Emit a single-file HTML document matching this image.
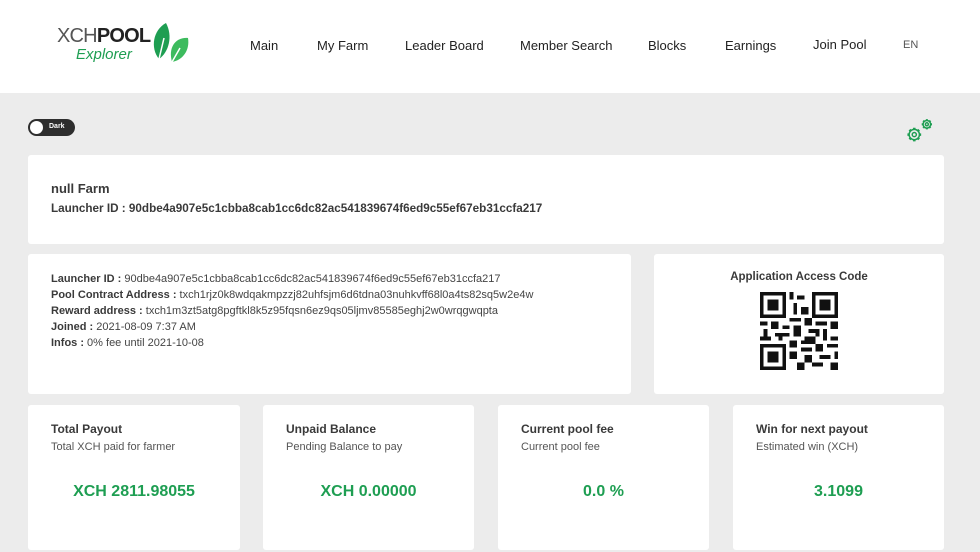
<!DOCTYPE html>
<html><head><meta charset="utf-8"><style>
*{margin:0;padding:0;box-sizing:border-box}
body{width:980px;height:552px;overflow:hidden;background:#ececec;font-family:"Liberation Sans",Arial,sans-serif;color:#333;position:relative}
.hdr{position:absolute;left:0;top:0;width:980px;height:93px;background:#fff}
.nav{position:absolute;top:38px;font-size:13px;color:#222}
.card{position:absolute;background:#fff;border-radius:3px}
.b{font-weight:bold;color:#3a3a3a}
.info{font-size:11px;line-height:16px;color:#444}
.st .t{position:absolute;left:23px;top:17px;font-size:12px;font-weight:bold;color:#3a3a3a}
.st .s{position:absolute;left:23px;top:36px;font-size:11px;color:#555}
.st .v{position:absolute;left:0;width:100%;top:78px;text-align:center;font-size:16px;font-weight:bold;color:#1e9e52}
</style></head><body>
<div class="hdr">
 <div style="position:absolute;left:57px;top:25px;font-size:20px;letter-spacing:-0.8px;color:#333"><span style="font-weight:normal;color:#555">XCH</span><span style="font-weight:900;color:#222">POOL</span></div>
 <div style="position:absolute;left:76px;top:46px;font-size:15px;font-style:italic;color:#1e9e52">Explorer</div>
 <svg style="position:absolute;left:150px;top:22px" width="40" height="42" viewBox="0 0 40 42"><path d="M16 1C3 8 0 26 9 37C19 30 23 14 16 1Z" fill="#1e9e52"/><path d="M38 16C25 15 18 26 22 40C33 38 40 28 38 16Z" fill="#3dbb5e"/><path d="M22 40L30 26" stroke="#fff" stroke-width="1.5"/><path d="M9 37L14 16" stroke="#fff" stroke-width="1.5"/></svg>
 <div class="nav" style="left:250px">Main</div>
 <div class="nav" style="left:317px">My Farm</div>
 <div class="nav" style="left:405px">Leader Board</div>
 <div class="nav" style="left:520px">Member Search</div>
 <div class="nav" style="left:648px">Blocks</div>
 <div class="nav" style="left:725px">Earnings</div>
 <div class="nav" style="left:813px;top:37px">Join Pool</div>
 <div class="nav" style="left:903px;font-size:11px;color:#555;top:39px">EN</div>
</div>
<div style="position:absolute;left:28px;top:119px;width:47px;height:17px;border-radius:9px;background:#2e2e2e">
 <div style="position:absolute;left:2px;top:2px;width:13px;height:13px;border-radius:50%;background:#fff"></div>
 <div style="position:absolute;left:21px;top:4px;font-size:7px;color:#fff;font-weight:bold">Dark</div>
</div>
<svg style="position:absolute;left:904px;top:115px" width="32" height="30" viewBox="0 0 28 26" fill="none" stroke="#1e9e52" stroke-width="1.3">
 <circle cx="9" cy="17" r="4.5"/><circle cx="9" cy="17" r="1.8"/>
 <g stroke-width="2.2"><path d="M9 11v1.5M9 21.5v1.5M3 17h1.5M13.5 17h1.5M4.8 12.8l1 1M12.2 20.2l1 1M4.8 21.2l1-1M12.2 13.8l1-1"/></g>
 <circle cx="20" cy="8" r="3.3"/><circle cx="20" cy="8" r="1.3"/>
 <g stroke-width="1.8"><path d="M20 3.5v1.2M20 11.3v1.2M15.5 8h1.2M23.3 8h1.2M16.8 4.8l.8.8M22.4 10.4l.8.8M16.8 11.2l.8-.8M22.4 5.6l.8-.8"/></g>
</svg>

<div class="card" style="left:28px;top:155px;width:916px;height:89px">
 <div style="position:absolute;left:23px;top:26px;font-size:13px" class="b">null Farm</div>
 <div style="position:absolute;left:23px;top:47px;font-size:11.7px" class="b">Launcher ID : 90dbe4a907e5c1cbba8cab1cc6dc82ac541839674f6ed9c55ef67eb31ccfa217</div>
</div>
<div class="card info" style="left:28px;top:254px;width:603px;height:140px;padding:17px 23px">
 <div><span class="b">Launcher ID :</span> 90dbe4a907e5c1cbba8cab1cc6dc82ac541839674f6ed9c55ef67eb31ccfa217</div>
 <div><span class="b">Pool Contract Address :</span> txch1rjz0k8wdqakmpzzj82uhfsjm6d6tdna03nuhkvff68l0a4ts82sq5w2e4w</div>
 <div><span class="b">Reward address :</span> txch1m3zt5atg8pgftkl8k5z95fqsn6ez9qs05ljmv85585eghj2w0wrqgwqpta</div>
 <div><span class="b">Joined :</span> 2021-08-09 7:37 AM</div>
 <div><span class="b">Infos :</span> 0% fee until 2021-10-08</div>
</div>
<div class="card" style="left:654px;top:254px;width:290px;height:140px">
 <div style="position:absolute;left:0;width:100%;top:17px;text-align:center;font-size:11.5px" class="b">Application Access Code</div>
 <svg style="position:absolute;left:106px;top:38px" width="78" height="78" viewBox="0 0 21 21" shape-rendering="crispEdges">
  <g fill="#111"><path d="M0 0h7v7h-7zM14 0h7v7h-7zM0 14h7v7h-7z"/></g>
  <g fill="#fff"><path d="M1 1h5v5h-5zM15 1h5v5h-5zM1 15h5v5h-5z"/></g>
  <g fill="#111"><path d="M2 2h3v3h-3zM16 2h3v3h-3zM2 16h3v3h-3z"/>
  <path d="M8 0h1v2h-1zM10 1h2v1h-2zM9 3h1v3h-1zM11 4h2v2h-2zM8 7h3v1h-3zM12 7h2v2h-2zM0 8h2v1h-2zM3 8h2v2h-2zM6 9h2v1h-2zM15 8h3v1h-3zM19 8h2v2h-2zM1 10h1v2h-1zM4 11h4v1h-4zM9 9h2v3h-2zM13 10h3v1h-3zM17 10h1v3h-1zM0 12h3v1h-3zM12 12h3v2h-3zM19 12h2v1h-2zM8 13h2v2h-2zM11 15h3v1h-3zM15 14h2v2h-2zM18 14h3v1h-3zM8 16h2v2h-2zM12 17h2v2h-2zM16 17h3v1h-3zM19 19h2v2h-2zM10 19h2v2h-2zM14 19h3v1h-3zM15 11h1v1h-1zM5 12h1v1h-1zM11 13h1v1h-1zM20 16h1v2h-1z"/></g>
 </svg>
</div>
<div class="card st" style="left:28px;top:405px;width:212px;height:145px"><div class="t">Total Payout</div><div class="s">Total XCH paid for farmer</div><div class="v">XCH 2811.98055</div></div>
<div class="card st" style="left:263px;top:405px;width:211px;height:145px"><div class="t">Unpaid Balance</div><div class="s">Pending Balance to pay</div><div class="v">XCH 0.00000</div></div>
<div class="card st" style="left:498px;top:405px;width:211px;height:145px"><div class="t">Current pool fee</div><div class="s">Current pool fee</div><div class="v">0.0 %</div></div>
<div class="card st" style="left:733px;top:405px;width:211px;height:145px"><div class="t">Win for next payout</div><div class="s">Estimated win (XCH)</div><div class="v">3.1099</div></div>
</body></html>
